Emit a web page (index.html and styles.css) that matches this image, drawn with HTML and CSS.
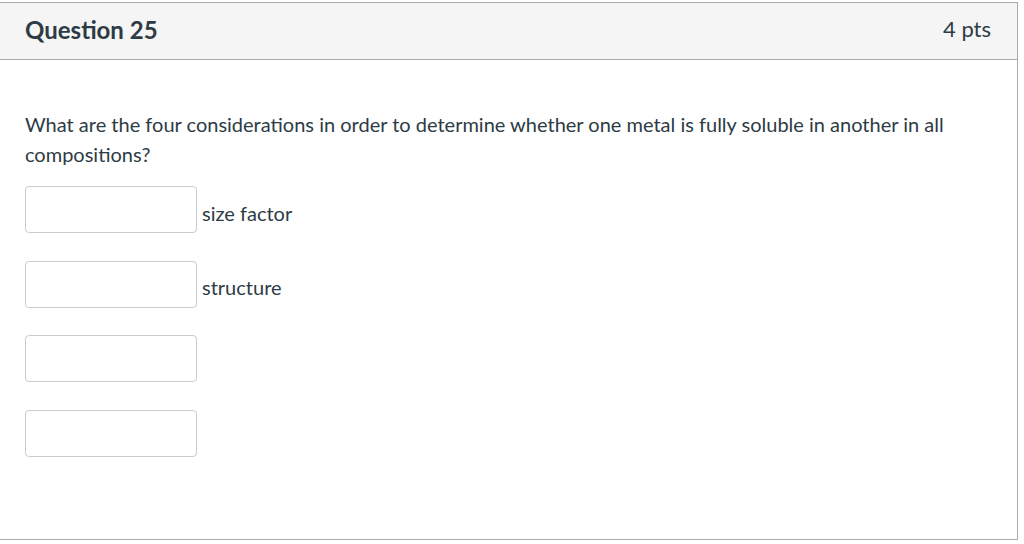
FILE: index.html
```html
<!DOCTYPE html>
<html lang="en">
<head>
<meta charset="utf-8">
<title>Question 25</title>
<link rel="stylesheet" href="styles.css">
</head>
<body>
<div class="question">
  <div class="header">
    <span class="name">Question 25</span>
    <span class="points">4 pts</span>
  </div>
  <div class="content">
    <p class="text">What are the four considerations in order to determine whether one metal is fully soluble in another in all compositions?</p>
    <div class="answers">
      <div class="answer"><input class="box" type="text"><span class="label">size factor</span></div>
      <div class="answer"><input class="box" type="text"><span class="label">structure</span></div>
      <div class="answer"><input class="box" type="text"></div>
      <div class="answer"><input class="box" type="text"></div>
    </div>
  </div>
</div>
</body>
</html>
```
FILE: styles.css
```css
html, body {
  margin: 0;
  padding: 0;
  background: #ffffff;
}
body {
  font-family: Lato, "Open Sans", "Liberation Sans", sans-serif;
  color: #2d3b45;
}
.question {
  margin: 2px 6px 0 -1px;
  height: 538px;
  box-sizing: border-box;
  border: 1px solid #aaaaaa;
  background: #ffffff;
}
.header {
  display: flex;
  justify-content: space-between;
  align-items: flex-start;
  height: 57px;
  box-sizing: border-box;
  padding: 12px 26px 0 25px;
  background: #f5f5f5;
  border-bottom: 1px solid #aaaaaa;
}
.name {
  font-size: 24px;
  font-weight: 700;
  line-height: 30px;
}
.points {
  font-size: 22px;
  font-weight: 400;
  line-height: 30px;
  margin-top: -1px;
}
.content {
  padding: 49px 25px 0 25px;
}
.text {
  margin: 0;
  font-size: 20px;
  line-height: 30px;
}
.answers {
  margin-top: 17px;
  display: flex;
  flex-direction: column;
  gap: 27.5px;
}
.answer {
  display: flex;
  align-items: center;
  gap: 5px;
}
.box {
  width: 172px;
  height: 47px;
  box-sizing: border-box;
  margin: 0;
  border: 1px solid #c7cdd1;
  border-radius: 4px;
  background: #ffffff;
  font-family: inherit;
  font-size: 20px;
}
.label {
  font-size: 20px;
  line-height: 30px;
  padding-top: 6px;
}
```
